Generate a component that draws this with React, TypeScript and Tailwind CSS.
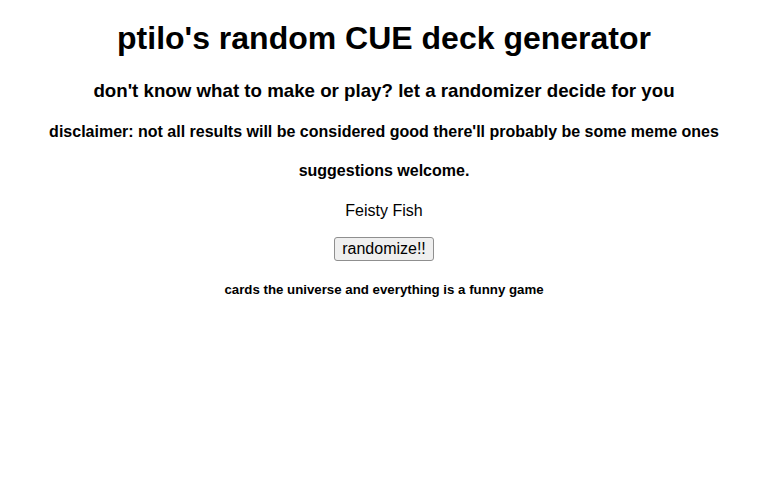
import React, { useState } from 'react';

const decks = ['Feisty Fish', 'Mythic Monsters', 'Space Explorers', 'Ancient Rulers', 'Deep Sea Oddities'];

export default function App() {
  const [deck, setDeck] = useState('Feisty Fish');

  const randomize = () => {
    setDeck(decks[Math.floor(Math.random() * decks.length)]);
  };

  return (
    <div className="min-h-screen bg-white text-black text-center font-['Liberation_Sans',Arial,sans-serif] pt-px">
      <h1 className="text-[32px] font-bold leading-[37px] mt-[19px] mb-[23px]">
        ptilo's random CUE deck generator
      </h1>
      <h3 className="text-[18.72px] font-bold leading-[21.5px] my-[18.72px]">
        don't know what to make or play? let a randomizer decide for you
      </h3>
      <h4 className="text-base font-bold leading-[18.4px] my-[21.28px]">
        disclaimer: not all results will be considered good there'll probably be some meme ones
      </h4>
      <h4 className="text-base font-bold leading-[18.4px] my-[21.28px]">suggestions welcome.</h4>
      <p className="text-base leading-[18.4px] my-4">{deck}</p>
      <p className="my-4">
        <button
          onClick={randomize}
          className="text-base leading-[18.4px] px-[7px] py-[2px] bg-[#efefef] border border-[#8f8f8f] rounded-[3px] text-black"
        >
          randomize!!
        </button>
      </p>
      <h5 className="text-[13.28px] font-bold leading-[15.3px] mt-[21px] mb-[22px]">
        cards the universe and everything is a funny game
      </h5>
    </div>
  );
}
